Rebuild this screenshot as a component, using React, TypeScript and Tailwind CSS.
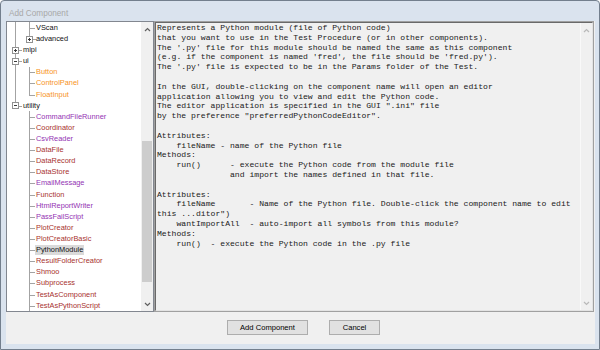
import React from 'react';

type Line = 'full' | 'top' | 'bottom' | 'none';
interface Row {
  label: string;
  level: 0 | 1;
  color: string;
  box?: '+' | '-';
  sel?: boolean;
  v0: Line;
  v1: Line;
}

const ORANGE = '#f7931e';
const PURPLE = '#9433b3';
const RED = '#a8322e';
const BLACK = '#111111';

const rows: Row[] = [
  { label: 'VScan', level: 1, color: BLACK, v0: 'full', v1: 'full' },
  { label: 'advanced', level: 1, color: BLACK, box: '+', v0: 'full', v1: 'top' },
  { label: 'mipi', level: 0, color: BLACK, box: '+', v0: 'full', v1: 'none' },
  { label: 'ui', level: 0, color: BLACK, box: '-', v0: 'full', v1: 'none' },
  { label: 'Button', level: 1, color: ORANGE, v0: 'full', v1: 'full' },
  { label: 'ControlPanel', level: 1, color: ORANGE, v0: 'full', v1: 'full' },
  { label: 'FloatInput', level: 1, color: ORANGE, v0: 'full', v1: 'top' },
  { label: 'utility', level: 0, color: BLACK, box: '-', v0: 'top', v1: 'none' },
  { label: 'CommandFileRunner', level: 1, color: PURPLE, v0: 'none', v1: 'full' },
  { label: 'Coordinator', level: 1, color: RED, v0: 'none', v1: 'full' },
  { label: 'CsvReader', level: 1, color: PURPLE, v0: 'none', v1: 'full' },
  { label: 'DataFile', level: 1, color: RED, v0: 'none', v1: 'full' },
  { label: 'DataRecord', level: 1, color: RED, v0: 'none', v1: 'full' },
  { label: 'DataStore', level: 1, color: RED, v0: 'none', v1: 'full' },
  { label: 'EmailMessage', level: 1, color: PURPLE, v0: 'none', v1: 'full' },
  { label: 'Function', level: 1, color: RED, v0: 'none', v1: 'full' },
  { label: 'HtmlReportWriter', level: 1, color: PURPLE, v0: 'none', v1: 'full' },
  { label: 'PassFailScript', level: 1, color: PURPLE, v0: 'none', v1: 'full' },
  { label: 'PlotCreator', level: 1, color: RED, v0: 'none', v1: 'full' },
  { label: 'PlotCreatorBasic', level: 1, color: RED, v0: 'none', v1: 'full' },
  { label: 'PythonModule', level: 1, color: BLACK, sel: true, v0: 'none', v1: 'full' },
  { label: 'ResultFolderCreator', level: 1, color: RED, v0: 'none', v1: 'full' },
  { label: 'Shmoo', level: 1, color: RED, v0: 'none', v1: 'full' },
  { label: 'Subprocess', level: 1, color: RED, v0: 'none', v1: 'full' },
  { label: 'TestAsComponent', level: 1, color: RED, v0: 'none', v1: 'full' },
  { label: 'TestAsPythonScript', level: 1, color: RED, v0: 'none', v1: 'full' },
];

const text = `Represents a Python module (file of Python code)
that you want to use in the Test Procedure (or in other components).
The '.py' file for this module should be named the same as this component
(e.g. if the component is named 'fred', the file should be 'fred.py').
The '.py' file is expected to be in the Params folder of the Test.

In the GUI, double-clicking on the component name will open an editor
application allowing you to view and edit the Python code.
The editor application is specified in the GUI ".ini" file
by the preference "preferredPythonCodeEditor".

Attributes:
    fileName - name of the Python file
Methods:
    run()      - execute the Python code from the module file
               and import the names defined in that file.

Attributes:
    fileName       - Name of the Python file. Double-click the component name to edit
this ...ditor")
    wantImportAll  - auto-import all symbols from this module?
Methods:
    run()  - execute the Python code in the .py file`;

function VLine({ kind, x }: { kind: Line; x: number }) {
  if (kind === 'none') return null;
  const cls =
    kind === 'full'
      ? 'top-0 h-full'
      : kind === 'top'
      ? 'top-0 h-1/2'
      : 'top-1/2 h-1/2';
  return <div className={`absolute w-px bg-[#a3a3a3] ${cls}`} style={{ left: x }} />;
}

function Box({ sign, left }: { sign: '+' | '-'; left: number }) {
  return (
    <div
      className="absolute top-[2px] w-[7px] h-[7px] border border-[#919191] bg-white"
      style={{ left }}
    >
      <div className="absolute left-[1px] top-[2px] w-[3px] h-px bg-[#3b3b3b]" />
      {sign === '+' && <div className="absolute left-[2px] top-[1px] w-px h-[3px] bg-[#3b3b3b]" />}
    </div>
  );
}

function TreeRow({ r }: { r: Row }) {
  return (
    <div className="relative h-[11.12px] flex items-center">
      <VLine kind={r.v0} x={8} />
      <VLine kind={r.v1} x={22} />
      {r.level === 0 && r.box && (
        <>
          <div className="absolute top-1/2 left-[12px] w-[3px] h-px bg-[#a3a3a3]" />
          <Box sign={r.box} left={5} />
        </>
      )}
      {r.level === 1 && !r.box && (
        <div className="absolute top-1/2 left-[22px] w-[6px] h-px bg-[#a3a3a3]" />
      )}
      {r.level === 1 && r.box && (
        <>
          <div className="absolute top-1/2 left-[26px] w-[3px] h-px bg-[#a3a3a3]" />
          <Box sign={r.box} left={19} />
        </>
      )}
      <span
        className={`relative whitespace-nowrap text-[7.4px] leading-[10px] px-[1px] ${
          r.level === 0 ? 'ml-[15px]' : 'ml-[28px]'
        } ${r.sel ? 'bg-[#dadada]' : ''}`}
        style={{ color: r.color, fontFamily: '"Liberation Sans", Arial, sans-serif' }}
      >
        {r.label}
      </span>
    </div>
  );
}

function Chevron({ up, color }: { up: boolean; color: string }) {
  return (
    <svg width="7" height="5" viewBox="0 0 7 5">
      <polyline
        points={up ? '1,4 3.5,1.5 6,4' : '1,1 3.5,3.5 6,1'}
        fill="none"
        stroke={color}
        strokeWidth="1.2"
      />
    </svg>
  );
}

export default function App() {
  return (
    <div
      className="w-[600px] h-[350px] bg-[#dae3ee] border border-[#737f8d] rounded-t-[4px] flex flex-col overflow-hidden"
      style={{ fontFamily: '"Liberation Sans", Arial, sans-serif' }}
    >
      <div className="h-[20px] flex items-start pl-[8px] pt-[8px]">
        <span className="text-[8.2px] leading-[9px] text-[#a8a8a8]">Add Component</span>
      </div>
      <div className="ml-[5px] mr-[4px] mb-[5px] flex-1 bg-[#f0f0f0] flex flex-col">
        <div className="flex h-[291px]">
          {/* Tree panel */}
          <div className="w-[148px] h-full border border-[#828790] bg-white flex">
            <div className="flex-1 overflow-hidden pt-[0.4px]">
              {rows.map((r) => (
                <TreeRow key={r.label} r={r} />
              ))}
            </div>
            <div className="w-[12px] h-full bg-[#f0f0f0] flex flex-col items-center">
              <div className="h-[14px] flex items-center justify-center">
                <Chevron up color="#606060" />
              </div>
              <div className="h-[105px]" />
              <div className="w-[10px] h-[141px] bg-[#cdcdcd]" />
              <div className="flex-1" />
              <div className="h-[14px] flex items-center justify-center">
                <Chevron up={false} color="#606060" />
              </div>
            </div>
          </div>
          {/* Text panel */}
          <div className="w-[440px] h-full border border-[#a0a0a0] flex">
            <div className="flex-1 flex border-l border-t border-[#696969] border-r-[#e3e3e3] border-b-[#e3e3e3] border-r border-b">
              <pre
                className="flex-1 pl-[1px] pt-0 text-[8.12px] leading-[9.8px] text-[#1a1a1a] overflow-hidden"
                style={{ fontFamily: '"Liberation Mono", "Courier New", monospace' }}
              >
                {text}
              </pre>
              <div className="w-[12px] h-full bg-[#f0f0f0] border-l border-[#f9f9f9] flex flex-col items-center">
                <div className="h-[14px] flex items-center justify-center">
                  <Chevron up color="#b9b9b9" />
                </div>
                <div className="flex-1" />
                <div className="h-[14px] flex items-center justify-center">
                  <Chevron up={false} color="#b9b9b9" />
                </div>
              </div>
            </div>
          </div>
        </div>
        <div className="flex justify-center gap-[21px] mt-[8px] pl-[6px]">
          <button className="w-[81px] h-[15px] bg-[#e1e1e1] border border-[#adadad] text-[7.6px] leading-[13px] text-black">
            Add Component
          </button>
          <button className="w-[51px] h-[15px] bg-[#e1e1e1] border border-[#adadad] text-[7.6px] leading-[13px] text-black">
            Cancel
          </button>
        </div>
      </div>
    </div>
  );
}
